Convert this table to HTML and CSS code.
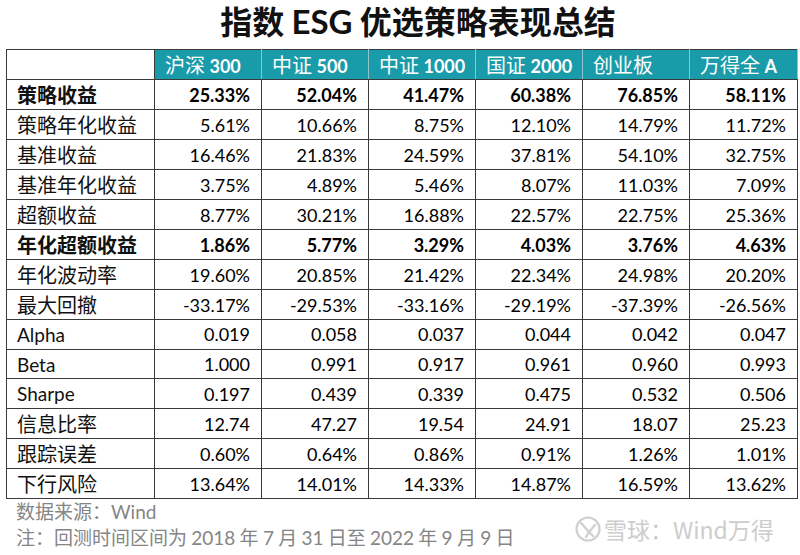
FILE: index.html
```html
<!DOCTYPE html>
<html lang="zh">
<head>
<meta charset="utf-8">
<title>指数 ESG 优选策略表现总结</title>
<link rel="stylesheet" href="styles.css">
</head>
<body>
<div class="page">
  <h1 class="title">指数 <span class="lat">ESG</span> 优选策略表现总结</h1>
  <table class="perf">
    <colgroup>
      <col class="c-label">
      <col class="c-val"><col class="c-val"><col class="c-val">
      <col class="c-val"><col class="c-val"><col class="c-val-last">
    </colgroup>
    <thead>
      <tr>
        <th class="blank"></th>
        <th>沪深 <span class="lat">300</span></th>
        <th>中证 <span class="lat">500</span></th>
        <th>中证 <span class="lat">1000</span></th>
        <th>国证 <span class="lat">2000</span></th>
        <th>创业板</th>
        <th>万得全 <span class="lat">A</span></th>
      </tr>
    </thead>
    <tbody>
      <tr class="bold"><td>策略收益</td><td>25.33%</td><td>52.04%</td><td>41.47%</td><td>60.38%</td><td>76.85%</td><td>58.11%</td></tr>
      <tr><td>策略年化收益</td><td>5.61%</td><td>10.66%</td><td>8.75%</td><td>12.10%</td><td>14.79%</td><td>11.72%</td></tr>
      <tr><td>基准收益</td><td>16.46%</td><td>21.83%</td><td>24.59%</td><td>37.81%</td><td>54.10%</td><td>32.75%</td></tr>
      <tr><td>基准年化收益</td><td>3.75%</td><td>4.89%</td><td>5.46%</td><td>8.07%</td><td>11.03%</td><td>7.09%</td></tr>
      <tr><td>超额收益</td><td>8.77%</td><td>30.21%</td><td>16.88%</td><td>22.57%</td><td>22.75%</td><td>25.36%</td></tr>
      <tr class="bold"><td>年化超额收益</td><td>1.86%</td><td>5.77%</td><td>3.29%</td><td>4.03%</td><td>3.76%</td><td>4.63%</td></tr>
      <tr><td>年化波动率</td><td>19.60%</td><td>20.85%</td><td>21.42%</td><td>22.34%</td><td>24.98%</td><td>20.20%</td></tr>
      <tr><td>最大回撤</td><td>-33.17%</td><td>-29.53%</td><td>-33.16%</td><td>-29.19%</td><td>-37.39%</td><td>-26.56%</td></tr>
      <tr><td class="en">Alpha</td><td>0.019</td><td>0.058</td><td>0.037</td><td>0.044</td><td>0.042</td><td>0.047</td></tr>
      <tr><td class="en">Beta</td><td>1.000</td><td>0.991</td><td>0.917</td><td>0.961</td><td>0.960</td><td>0.993</td></tr>
      <tr><td class="en">Sharpe</td><td>0.197</td><td>0.439</td><td>0.339</td><td>0.475</td><td>0.532</td><td>0.506</td></tr>
      <tr><td>信息比率</td><td>12.74</td><td>47.27</td><td>19.54</td><td>24.91</td><td>18.07</td><td>25.23</td></tr>
      <tr><td>跟踪误差</td><td>0.60%</td><td>0.64%</td><td>0.86%</td><td>0.91%</td><td>1.26%</td><td>1.01%</td></tr>
      <tr><td>下行风险</td><td>13.64%</td><td>14.01%</td><td>14.33%</td><td>14.87%</td><td>16.59%</td><td>13.62%</td></tr>
    </tbody>
  </table>
  <div class="notes">
    <p>数据来源：<span class="lat-n">Wind</span></p>
    <p>注：回测时间区间为 <span class="lat-n">2018</span> 年 <span class="lat-n">7</span> 月 <span class="lat-n">31</span> 日至 <span class="lat-n">2022</span> 年 <span class="lat-n">9</span> 月 <span class="lat-n">9</span> 日</p>
  </div>
  <div class="watermark">
    <svg class="wm-logo" viewBox="0 0 26 26" width="26" height="26" aria-hidden="true">
      <circle cx="13" cy="13" r="11.5" fill="none" stroke="#d0d0d0" stroke-width="2.2"/>
      <path d="M6 7 L14 16 M14 16 L20 9 M11 21 L14 16 M14 16 L18 20" fill="none" stroke="#d0d0d0" stroke-width="2.4" stroke-linecap="round"/>
    </svg>
    <span>雪球：Wind万得</span>
  </div>
</div>
</body>
</html>
```

FILE: styles.css
```css
html, body {
  margin: 0;
  padding: 0;
  background: #ffffff;
}

.page {
  position: relative;
  width: 800px;
  height: 555px;
  font-family: Lato, "Noto Sans CJK SC", sans-serif;
  color: #0d0d0d;
}

.title {
  margin: 0 0 10px;
  padding: 2px 0 0 36px;
  line-height: 36px;
  font-size: 32px;
  font-weight: 700;
  text-align: center;
  font-family: "Noto Sans CJK SC", sans-serif;
  color: #111111;
}

.title .lat {
  font-family: Lato, sans-serif;
  font-weight: 700;
  font-size: 33px;
}

.perf {
  margin-left: 6px;
  width: 790px;
  border-collapse: collapse;
  table-layout: fixed;
}

.c-label { width: 148px; }
.c-val { width: 107px; }
.c-val-last { width: 108px; }

.perf th,
.perf td {
  border: 1px solid #3a3a3a;
  padding: 0 11px 0 10px;
  white-space: nowrap;
}

.perf th {
  height: 29px;
  background: #1a9ba9;
  color: #ffffff;
  font-weight: 400;
  font-size: 20px;
  text-align: left;
  padding-left: 10px;
  border-color: #3a3a3a #8fc6cd;
  font-family: "Noto Sans CJK SC", sans-serif;
}

.perf th .lat {
  font-family: Lato, sans-serif;
  font-weight: 700;
  font-size: 18px;
}

.perf th.blank {
  background: #ffffff;
  border-color: #3a3a3a;
}

.perf td {
  height: 28.7px;
  font-size: 18px;
  text-align: right;
  color: #000000;
}

.perf td:first-child {
  text-align: left;
  font-size: 20px;
  font-family: "Noto Sans CJK SC", Lato, sans-serif;
  color: #111111;
}

.perf td.en {
  font-family: Lato, sans-serif;
  font-size: 19px;
}

.perf tr.bold td {
  font-weight: 700;
}

.notes {
  margin-top: -1px;
  padding: 0 0 0 16px;
  color: #858585;
  font-size: 19px;
  font-family: "Noto Sans CJK SC", sans-serif;
}

.notes .lat-n {
  font-family: Lato, sans-serif;
  font-size: 19px;
}

.notes p {
  margin: 0;
  line-height: 25px;
}

.watermark {
  position: absolute;
  left: 575px;
  top: 514px;
  display: flex;
  align-items: center;
  gap: 3px;
  color: #cdcdcd;
  font-size: 23px;
  font-family: "Noto Sans CJK SC", sans-serif;
  line-height: 30px;
}

.wm-logo {
  display: block;
}
```
